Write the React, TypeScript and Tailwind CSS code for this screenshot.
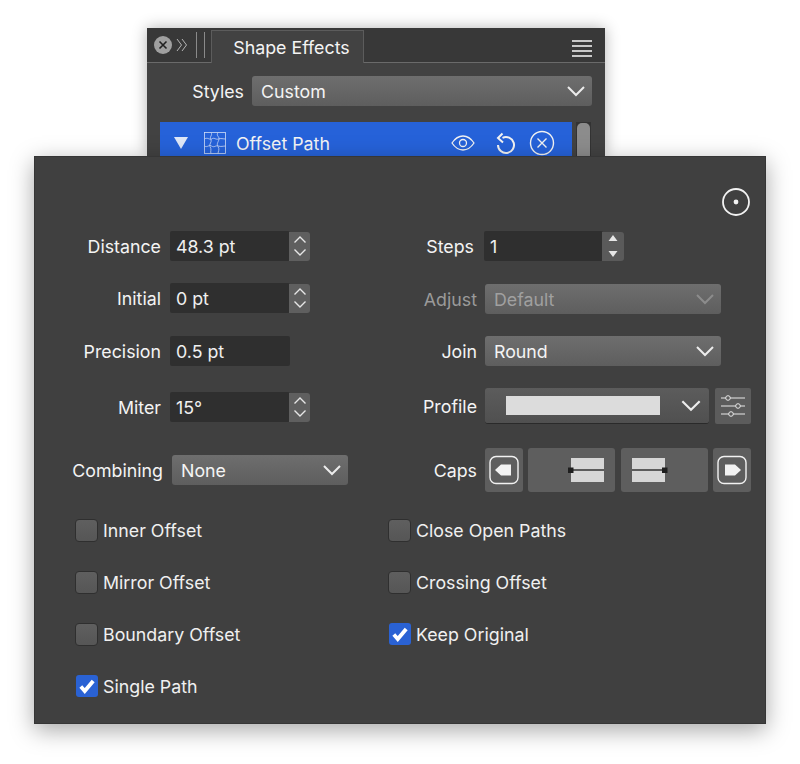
import type { ReactNode } from 'react';

const selectBg = 'bg-gradient-to-b from-[#6e6e6e] to-[#5e5e5e]';

function Chevron({ className, stroke = '#ececec' }: { className: string; stroke?: string }) {
  return (
    <svg viewBox="0 0 20 12" className={className} fill="none">
      <path d="M2 2l8 8 8-8" stroke={stroke} strokeWidth="2" />
    </svg>
  );
}

function Stepper() {
  return (
    <div className="w-[21px] h-[29px] -ml-px rounded-r-[3px] bg-[#5f5f5f] flex items-center justify-center">
      <svg viewBox="0 0 14 24" className="w-[14px] h-[24px]" fill="none" stroke="#e6e6e6" strokeWidth="1.400">
        <path d="M1.500 8.500L7 3l5.500 5.500" />
        <path d="M1.500 15.500L7 21l5.500-5.500" />
      </svg>
    </div>
  );
}

function NumberField({ label, value, stepper = true, className }: { label: string; value: string; stepper?: boolean; className: string }) {
  return (
    <div className={`flex items-center ${className}`}>
      <span className="w-[127px] pt-[2px] text-right text-[#f4f4f4]">{label}</span>
      <div className="ml-[9px] w-[120px] h-[30px] rounded-[2px] bg-[#2f2f2f] pl-[6px] pt-[2px] flex items-center text-[#f0f0f0]">{value}</div>
      {stepper && <Stepper />}
    </div>
  );
}

function Select({ value, className, disabled }: { value: string; className: string; disabled?: boolean }) {
  return (
    <div className={`h-[30px] rounded-[3px] flex items-center justify-between pl-[9px] pr-[6px] ${selectBg} ${className}`}>
      <span className={`pt-[2px] ${disabled ? 'text-[#a0a0a0]' : 'text-[#f4f4f4]'}`}>{value}</span>
      <Chevron className="w-[20px] h-[12px]" stroke={disabled ? '#8c8c8c' : '#ececec'} />
    </div>
  );
}

function RightRow({ label, className, disabled, labelWidth = 'w-[96px]', children }: { label: string; className: string; disabled?: boolean; labelWidth?: string; children: ReactNode }) {
  return (
    <div className={`flex items-center ${className}`}>
      <span className={`${labelWidth} pt-[2px] text-right ${disabled ? 'text-[#9a9a9a]' : 'text-[#f4f4f4]'}`}>{label}</span>
      {children}
    </div>
  );
}

function CapEnd({ dir }: { dir: 'left' | 'right' }) {
  return (
    <div className="w-[38px] h-[44px] rounded-[3px] bg-[#5e5e5e] flex items-center justify-center">
      <svg viewBox="0 0 30 30" className="w-[30px] h-[30px]" fill="none">
        <rect x="1" y="1.500" width="28" height="27" rx="6" stroke="#f2f2f2" strokeWidth="1.400" />
        {dir === 'left' ? <path d="M22 9.500H12l-6 5.500 6 5.500h10z" fill="#f2f2f2" /> : <path d="M8 9.500h10l6 5.500-6 5.500H8z" fill="#f2f2f2" />}
      </svg>
    </div>
  );
}

function CapType({ dir, className }: { dir: 'left' | 'right'; className: string }) {
  return (
    <div className={`w-[87px] h-[44px] rounded-[3px] bg-[#5e5e5e] flex items-center ${dir === 'left' ? 'justify-end pr-[10px]' : 'justify-start pl-[10px]'} ${className}`}>
      <svg viewBox="0 0 37 24" className="w-[37px] h-[24px]">
        <rect x={dir === 'left' ? 3 : 1} y="0" width="33" height="24" fill="#d6d6d6" />
        <path d={dir === 'left' ? 'M3 12h33' : 'M1 12h33'} stroke="#333" strokeWidth="1.500" />
        <rect x={dir === 'left' ? 0 : 31} y="9.500" width="5.500" height="5.500" fill="#1e1e1e" />
      </svg>
    </div>
  );
}

function Check({ label, checked }: { label: string; checked?: boolean }) {
  return (
    <div className="flex items-center h-[52px]">
      {checked ? (
        <div className="w-[22px] h-[22px] ml-px mr-[5px] rounded-[3px] bg-[#2a62d4] flex items-center justify-center">
          <svg viewBox="0 0 16 16" className="w-[18px] h-[18px]" fill="none">
            <path d="M2.500 8.500l3.500 4 7.500-9" stroke="#fff" strokeWidth="3.400" />
          </svg>
        </div>
      ) : (
        <div className="w-[23px] h-[23px] mr-[5px] rounded-[4px] border border-[#2f2f2f] bg-gradient-to-b from-[#5f5f5f] to-[#565656]" />
      )}
      <span className="pt-[2px] text-[#f0f0f0]">{label}</span>
    </div>
  );
}

export default function App() {
  return (
    <div className="w-[800px] h-[764px] bg-white pt-[28px] text-[17.800px] leading-[22px] font-['Inter','Liberation_Sans',sans-serif]">
      {/* Shape Effects palette, cut off by the popover */}
      <div className="ml-[147px] w-[458px] h-[128px] overflow-hidden bg-[#424242] shadow-[0_0_14px_rgba(0,0,0,0.3)]">
        <div className="h-[35px] bg-[#383838] border-b border-[#6a6a6a] flex items-end">
          <div className="h-[34px] self-start flex items-center pl-[7px]">
            <div className="w-[18px] h-[18px] rounded-full bg-[#a0a0a0] flex items-center justify-center">
              <svg viewBox="0 0 10 10" className="w-[10px] h-[10px]" stroke="#222" strokeWidth="1.600">
                <path d="M1.500 1.500l7 7M8.500 1.500l-7 7" />
              </svg>
            </div>
            <svg viewBox="0 0 12 14" className="w-[12px] h-[14px] ml-[4px]" fill="none" stroke="#b5b5b5" strokeWidth="1">
              <path d="M1 1l4.500 6L1 13M6 1l4.500 6L6 13" />
            </svg>
            <div className="ml-[8px] w-[9px] h-[26px] border-x border-[#8a8a8a]" />
          </div>
          <div className="ml-[6px] w-[153px] h-[33px] bg-[#424242] border-x border-t border-[#5c5c5c] -mb-px flex items-center justify-center pl-[8px] pt-[2px] text-[#f4f4f4]">
            Shape Effects
          </div>
          <div className="ml-auto self-start mt-[12px] mr-[13px] w-[20px] h-[17px] flex flex-col justify-between">
            <div className="h-[1.500px] bg-[#c8c8c8]" />
            <div className="h-[1.500px] bg-[#c8c8c8]" />
            <div className="h-[1.500px] bg-[#c8c8c8]" />
            <div className="h-[1.500px] bg-[#c8c8c8]" />
          </div>
        </div>
        <div className="flex items-center mt-[13px]">
          <span className="w-[97px] pt-[2px] text-right text-[#f4f4f4]">Styles</span>
          <Select value="Custom" className="ml-[8px] w-[340px]" />
        </div>
        <div className="flex mt-[16px] ml-[13px]">
          <div className="w-[412px] h-[42px] bg-[#2662d9] flex items-center text-[#f4f4f4]">
            <svg viewBox="0 0 14 12" className="ml-[14px] w-[14px] h-[12px]">
              <path d="M0 0h14L7 12z" fill="#dfe7f7" />
            </svg>
            <svg viewBox="0 0 22 22" className="ml-[16px] w-[22px] h-[22px]" fill="none" stroke="#cfdcf7" strokeWidth="0.800">
              <rect x="0.500" y="0.500" width="21" height="21" />
              <path d="M7 .5c2 3-2 4 0 7 1 3-2 4-1 7 2 3 0 5 1 7M14 .5c-2 3 1 4 1 6 0 3-3 5-1 8 2 3 0 5 0 7M.5 7c3-2 5 1 7 0 3-2 4 1 7 0 2-1 5 0 7 0M.5 14c3 2 5-2 7 0 3 2 4-1 7 0 2 1 5 0 7 0" />
            </svg>
            <span className="ml-[10px] pt-[1px]">Offset Path</span>
            <svg viewBox="0 0 24 16" className="ml-auto w-[24px] h-[16px]" fill="none" stroke="#f2f2f2" strokeWidth="1.300">
              <path d="M1 8c3-4.500 7-7 11-7s8 2.500 11 7c-3 4.500-7 7-11 7S4 12.500 1 8z" />
              <circle cx="12" cy="8" r="3.500" />
            </svg>
            <svg viewBox="0 0 20 24" className="ml-[20px] w-[20px] h-[24px]" fill="none" stroke="#f2f2f2" strokeWidth="2">
              <path d="M7.500 6.800a8 8 0 1 1-4.500 7.200" />
              <path d="M7.500 2.500L3 7l5 4.500" />
            </svg>
            <svg viewBox="0 0 26 26" className="ml-[14px] mr-[17px] w-[26px] h-[26px]" fill="none" stroke="#f2f2f2" strokeWidth="1.400">
              <circle cx="13" cy="13" r="11.500" />
              <path d="M8.500 8.500l9 9M17.500 8.500l-9 9" />
            </svg>
          </div>
          <div className="ml-[4px] w-[15px] h-[42px] bg-[#333] flex justify-center pt-px">
            <div className="w-[13px] h-[40px] rounded-[5px] bg-[#8c8c8c]" />
          </div>
        </div>
      </div>

      {/* Offset Path popover */}
      <div className="ml-[34px] w-[732px] h-[568px] relative bg-[#404040] shadow-[0_6px_22px_rgba(0,0,0,0.35),inset_0_0_0_1px_#363636]">
        <div className="flex justify-end pt-[31px] pr-[15px]">
          <svg viewBox="0 0 30 30" className="w-[30px] h-[30px]" fill="none">
            <circle cx="15" cy="15" r="13" stroke="#f2f2f2" strokeWidth="1.800" />
            <circle cx="15" cy="15" r="2.400" fill="#f2f2f2" />
          </svg>
        </div>
        <div className="flex mt-[14px]">
          <div className="w-[347px]">
            <NumberField label="Distance" value="48.3 pt" className="h-[30px]" />
            <NumberField label="Initial" value="0 pt" className="h-[30px] mt-[22px]" />
            <NumberField label="Precision" value="0.5 pt" stepper={false} className="h-[30px] mt-[23px]" />
            <NumberField label="Miter" value="15°" className="h-[30px] mt-[26px]" />
            <div className="flex items-center h-[30px] mt-[33px]">
              <span className="w-[129px] pt-[2px] text-right text-[#f4f4f4]">Combining</span>
              <Select value="None" className="ml-[9px] w-[176px]" />
            </div>
          </div>
          <div className="flex-1">
            <RightRow label="Steps" labelWidth="w-[93px]" className="h-[30px]">
              <div className="ml-[10px] w-[119px] h-[30px] rounded-[2px] bg-[#2f2f2f] pl-[6px] pt-[2px] flex items-center text-[#f0f0f0]">1</div>
              <div className="w-[22px] h-[29px] -ml-px rounded-r-[3px] bg-[#5a5a5a] flex items-center justify-center">
                <svg viewBox="0 0 12 24" className="w-[12px] h-[24px]" fill="#e6e6e6">
                  <path d="M6 1l4.500 6h-9zM6 23l4.500-6h-9z" />
                </svg>
              </div>
            </RightRow>
            <RightRow label="Adjust" disabled className="h-[30px] mt-[23px]">
              <Select value="Default" disabled className="ml-[8px] w-[236px]" />
            </RightRow>
            <RightRow label="Join" className="h-[30px] mt-[22px]">
              <Select value="Round" className="ml-[8px] w-[236px]" />
            </RightRow>
            <RightRow label="Profile" className="h-[36px] mt-[22px]">
              <div className="ml-[8px] w-[224px] h-[36px] rounded-[3px] border-b border-[#2a2a2a] bg-gradient-to-b from-[#5c5c5c] to-[#505050] flex items-center pl-[21px] pr-[7px] justify-between">
                <div className="w-[154px] h-[19px] bg-[#dcdcdc]" />
                <Chevron className="w-[22px] h-[13px]" />
              </div>
              <div className="ml-[6px] w-[36px] h-[36px] rounded-[2px] bg-[#5c5c5c] flex items-center justify-center">
                <svg viewBox="0 0 24 24" className="w-[24px] h-[24px]" fill="#5c5c5c" stroke="#e8e8e8" strokeWidth="1">
                  <path d="M0 4h24M0 12h24M0 20h24" />
                  <circle cx="7" cy="4" r="2.300" />
                  <circle cx="17" cy="12" r="2.300" />
                  <circle cx="10" cy="20" r="2.300" />
                </svg>
              </div>
            </RightRow>
            <RightRow label="Caps" className="h-[44px] mt-[24px]">
              <div className="ml-[8px] flex">
                <CapEnd dir="left" />
                <CapType dir="left" className="ml-[5px]" />
                <CapType dir="right" className="ml-[6px]" />
                <div className="ml-[5px]">
                  <CapEnd dir="right" />
                </div>
              </div>
            </RightRow>
          </div>
        </div>
        <div className="flex mt-[12px] pl-[41px]">
          <div className="w-[313px]">
            <Check label="Inner Offset" />
            <Check label="Mirror Offset" />
            <Check label="Boundary Offset" />
            <Check label="Single Path" checked />
          </div>
          <div>
            <Check label="Close Open Paths" />
            <Check label="Crossing Offset" />
            <Check label="Keep Original" checked />
          </div>
        </div>
      </div>
    </div>
  );
}
